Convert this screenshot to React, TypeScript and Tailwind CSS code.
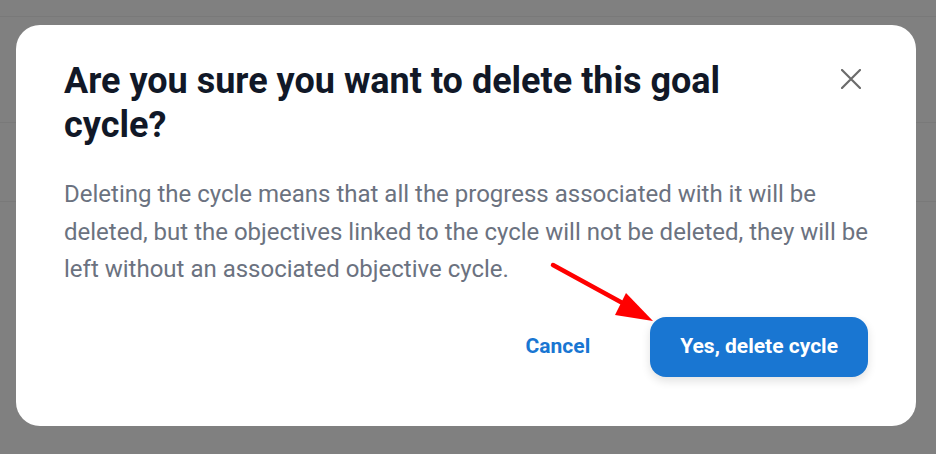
import React from "react";

export default function App() {
  return (
    <div className="relative h-[454px] w-[936px] overflow-hidden bg-[#808080]" style={{ fontFamily: "Roboto, 'Liberation Sans', sans-serif" }}>
      <div className="flex flex-col">
        <div className="h-[17px] border-b border-[#797979]" />
        <div className="h-[106px] border-b border-[#797979]" />
        <div className="h-[79px] border-b border-[#797979]" />
      </div>

      <div className="absolute left-4 top-[25px] w-[900px] rounded-3xl bg-white px-12 pb-[49px] pt-[34px]">
        <div className="flex items-start justify-between">
          <h2 className="w-[700px] text-[36px] font-bold leading-[44px] text-[#111827]">
            Are you sure you want to delete this goal cycle?
          </h2>
          <button className="mr-[7px] mt-[10px] flex h-[20px] w-[20px] items-center justify-center">
            <svg width="20" height="20" viewBox="0 0 20 20" fill="none" stroke="#6b6b6b" strokeWidth="2.2" strokeLinecap="round">
              <path d="M1 1L19 19M19 1L1 19" />
            </svg>
          </button>
        </div>

        <p className="mt-[29px] text-[24px] leading-[37.5px] text-[#6b7280]">
          Deleting the cycle means that all the progress associated with it will be deleted, but the objectives linked to the cycle will not be deleted, they will be left without an associated objective cycle.
        </p>

        <div className="mt-[28.5px] flex items-center justify-end gap-[60px]">
          <button className="text-[21px] font-bold text-[#1976d2]">Cancel</button>
          <button className="h-[60px] rounded-[16px] bg-[#1976d2] px-[30px] text-[21px] font-bold text-white shadow-[0_4px_10px_rgba(0,0,0,0.12)]">
            Yes, delete cycle
          </button>
        </div>
      </div>

      <svg className="pointer-events-none absolute left-0 top-0" width="936" height="454">
        <line x1="553" y1="265" x2="628" y2="306" stroke="#ff0000" strokeWidth="4.5" strokeLinecap="round" />
        <polygon points="653,321 626,293 615,315" fill="#ff0000" />
      </svg>
    </div>
  );
}
